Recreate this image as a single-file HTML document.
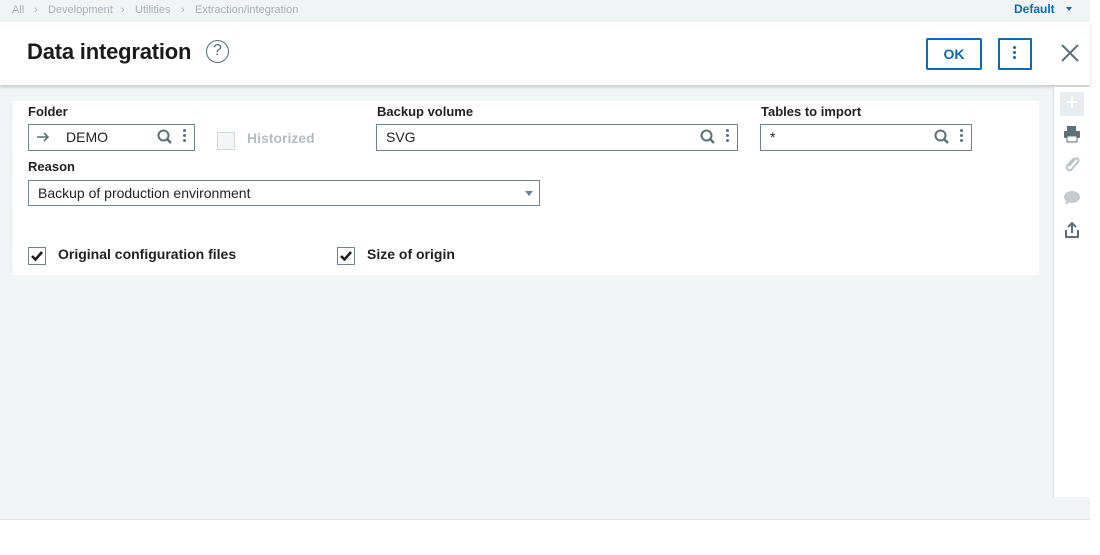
<!DOCTYPE html>
<html><head><style>
*{box-sizing:border-box;margin:0;padding:0}
body{width:1100px;height:555px;background:#fff;font-family:"Liberation Sans",sans-serif;position:relative;overflow:hidden}
.abs{position:absolute}
.bg{left:0;top:0;width:1090px;height:520px;background:#f1f4f5;border-bottom:1px solid #dfe2e4}
.crumb{top:4px;font-size:11px;color:#a9b1b6}
.hdr{left:0;top:22px;width:1090px;height:63px;background:#fff;box-shadow:0 2px 3px rgba(0,0,0,.18)}
.lbl{font-size:13px;font-weight:bold;color:#222}
.inp{height:27px;border:1px solid #6b8591;background:#fff;font-size:14px;color:#222;padding-left:9px;line-height:25px}
.dots{position:absolute;width:3px}
.dots i{display:block;width:3px;height:3px;border-radius:50%;background:#5d7079;margin-bottom:2px}
.cb{width:18px;height:18px;border:1px solid #6b8591;background:#fff}
</style></head><body>
<div class="abs bg"></div>
<div class="abs crumb" style="left:12px">All</div>
<div class="abs crumb" style="left:34px">&#x203A;</div>
<div class="abs crumb" style="left:48px">Development</div>
<div class="abs crumb" style="left:121px">&#x203A;</div>
<div class="abs crumb" style="left:135px">Utilities</div>
<div class="abs crumb" style="left:181px">&#x203A;</div>
<div class="abs crumb" style="left:195px">Extraction/integration</div>
<div class="abs" style="left:1014px;top:2px;font-size:12px;font-weight:bold;color:#0a6ab3">Default</div>
<div class="abs" style="left:1066px;top:7px;border:3px solid transparent;border-top:4px solid #0a6ab3"></div>
<div class="abs hdr"></div>
<div class="abs" style="left:27px;top:39px;font-size:22px;font-weight:bold;color:#1b1b1b;letter-spacing:-0.2px">Data integration</div>
<div class="abs" style="left:206px;top:40px;width:23px;height:23px;border:1.5px solid #4f6b78;border-radius:50%;text-align:center;font-size:16px;line-height:20px;color:#4f6b78">?</div>
<div class="abs" style="left:926px;top:38px;width:56px;height:32px;border:2px solid #0a6ab3;border-radius:2px;text-align:center;line-height:28px;font-weight:bold;font-size:14px;color:#0a6ab3">OK</div>
<div class="abs" style="left:998px;top:38px;width:34px;height:32px;border:2px solid #0a6ab3;border-radius:1px"></div>
<div class="dots" style="left:1013px;top:46px"><i style="background:#0a6ab3"></i><i style="background:#0a6ab3"></i><i style="background:#0a6ab3"></i></div>
<svg class="abs" style="left:1060px;top:43px" width="20" height="20"><path d="M2 2L18 18M18 2L2 18" stroke="#5d7079" stroke-width="2"/></svg>
<div class="abs" style="left:1053px;top:87px;width:37px;height:410px;background:#fff;border-left:1px solid #d6dadc"></div>
<div class="abs" style="left:1060px;top:92px;width:24px;height:24px;background:#e9ecee;color:#fff;font-size:24px;text-align:center;line-height:22px">+</div>
<svg class="abs" style="left:1062px;top:125px" width="20" height="18"><rect x="5" y="1" width="9" height="5" fill="#5d7079"/><rect x="2" y="6" width="16" height="7" rx="1" fill="#5d7079"/><rect x="5" y="11" width="10" height="6" fill="#fff" stroke="#5d7079"/></svg>
<svg class="abs" style="left:1062px;top:155px" width="18" height="20"><path d="M12 3L5 11a3 3 0 0 0 4 4l7-8a2 2 0 0 0-3-3l-6 7" stroke="#bcc3c7" stroke-width="2" fill="none"/></svg>
<svg class="abs" style="left:1062px;top:190px" width="20" height="16"><ellipse cx="10" cy="7" rx="8" ry="6" fill="#c5cbce"/><path d="M4 11L3 15L8 12Z" fill="#c5cbce"/></svg>
<svg class="abs" style="left:1063px;top:221px" width="18" height="18"><path d="M9 12V2M5 6L9 2L13 6M3 9V16H15V9" stroke="#5d7079" stroke-width="2" fill="none"/></svg>
<div class="abs" style="left:13px;top:101px;width:1026px;height:174px;background:#fff"></div>
<div class="abs lbl" style="left:28px;top:104px">Folder</div>
<div class="abs inp" style="left:28px;top:124px;width:167px;padding-left:37px">DEMO</div>
<svg class="abs" style="left:36px;top:132px" width="14" height="10"><path d="M1 5H12M8 1L12 5L8 9" stroke="#5d7079" stroke-width="1.6" fill="none"/></svg>
<svg class="abs" style="left:157px;top:129px" width="16" height="16"><circle cx="6.5" cy="6.5" r="5" stroke="#5d7079" stroke-width="2" fill="none"/><path d="M10 10L14 14" stroke="#5d7079" stroke-width="2.5"/></svg>
<div class="dots" style="left:183px;top:129px"><i></i><i></i><i></i></div>
<div class="abs" style="left:217px;top:132px;width:18px;height:18px;border:1px solid #d3d8da;background:#f3f5f6"></div>
<div class="abs" style="left:247px;top:130px;font-size:14px;font-weight:bold;color:#b6bdc1">Historized</div>
<div class="abs lbl" style="left:377px;top:104px">Backup volume</div>
<div class="abs inp" style="left:376px;top:124px;width:362px">SVG</div>
<svg class="abs" style="left:700px;top:129px" width="16" height="16"><circle cx="6.5" cy="6.5" r="5" stroke="#5d7079" stroke-width="2" fill="none"/><path d="M10 10L14 14" stroke="#5d7079" stroke-width="2.5"/></svg>
<div class="dots" style="left:726px;top:129px"><i></i><i></i><i></i></div>
<div class="abs lbl" style="left:761px;top:104px">Tables to import</div>
<div class="abs inp" style="left:760px;top:124px;width:212px">*</div>
<svg class="abs" style="left:934px;top:129px" width="16" height="16"><circle cx="6.5" cy="6.5" r="5" stroke="#5d7079" stroke-width="2" fill="none"/><path d="M10 10L14 14" stroke="#5d7079" stroke-width="2.5"/></svg>
<div class="dots" style="left:960px;top:129px"><i></i><i></i><i></i></div>
<div class="abs lbl" style="left:28px;top:159px">Reason</div>
<div class="abs inp" style="left:28px;top:180px;width:512px;height:26px;line-height:24px">Backup of production environment</div>
<div class="abs" style="left:525px;top:191px;border:4px solid transparent;border-top:5px solid #6b8591"></div>
<div class="abs cb" style="left:28px;top:247px"></div>
<svg class="abs" style="left:30px;top:249px" width="14" height="14"><path d="M2 7L5.5 10.5L12 3" stroke="#1b1b1b" stroke-width="2.6" fill="none"/></svg>
<div class="abs" style="left:58px;top:246px;font-size:14px;font-weight:bold;color:#222">Original configuration files</div>
<div class="abs cb" style="left:337px;top:247px"></div>
<svg class="abs" style="left:339px;top:249px" width="14" height="14"><path d="M2 7L5.5 10.5L12 3" stroke="#1b1b1b" stroke-width="2.6" fill="none"/></svg>
<div class="abs" style="left:367px;top:246px;font-size:14px;font-weight:bold;color:#222">Size of origin</div>
</body></html>
